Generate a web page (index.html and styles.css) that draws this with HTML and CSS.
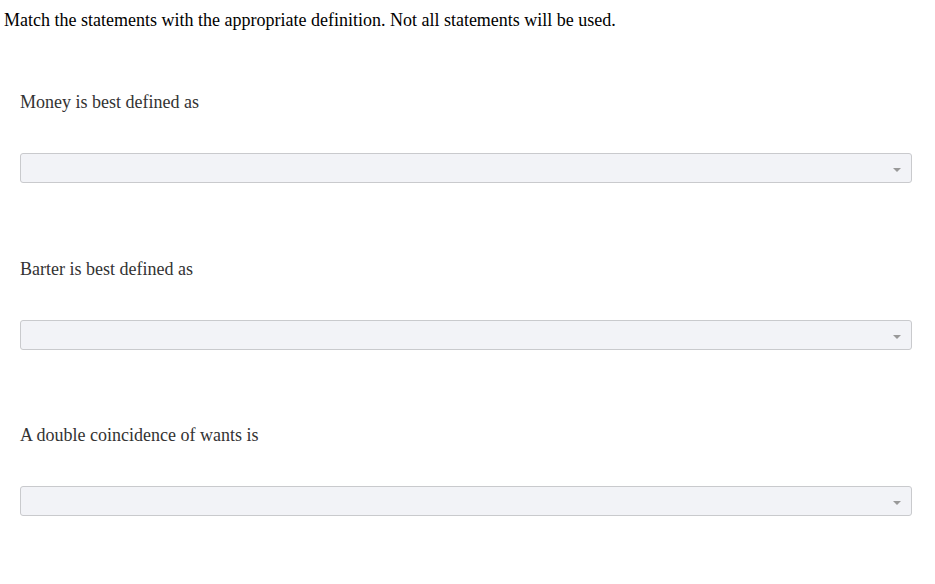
FILE: index.html
```html
<!DOCTYPE html>
<html lang="en">
<head>
  <meta charset="UTF-8" />
  <title>Matching</title>
  <link rel="stylesheet" href="styles.css">
</head>
<body>
  <p class="intro">Match the statements with the appropriate definition. Not all statements will be used.</p>

  <div class="questions">
    <div class="question">
      <div class="prompt">Money is best defined as</div>
      <div class="select"><span class="caret"></span></div>
    </div>
    <div class="question">
      <div class="prompt">Barter is best defined as</div>
      <div class="select"><span class="caret"></span></div>
    </div>
    <div class="question">
      <div class="prompt">A double coincidence of wants is</div>
      <div class="select"><span class="caret"></span></div>
    </div>
  </div>
</body>
</html>
```

FILE: styles.css
```css
body {
  margin: 0;
  font-family: "Liberation Serif", "Times New Roman", serif;
  font-size: 18px;
  color: #000;
  background: #fff;
}

.intro {
  margin: 0;
  padding: 11px 4px 0;
  line-height: 18px;
}

.questions {
  display: flex;
  flex-direction: column;
  gap: 76.5px;
  padding: 64px 23px 0 20px;
}

.prompt {
  line-height: 18px;
  color: #333;
}

.select {
  margin-top: 42px;
  height: 30px;
  box-sizing: border-box;
  background-color: #f2f3f7;
  border: 1px solid #c9cacd;
  border-radius: 3px;
  display: flex;
  align-items: center;
  justify-content: flex-end;
  padding-right: 10px;
}

.caret {
  width: 0;
  height: 0;
  border-left: 4px solid transparent;
  border-right: 4px solid transparent;
  border-top: 4px solid #999;
  margin-top: 4px;
}
```
